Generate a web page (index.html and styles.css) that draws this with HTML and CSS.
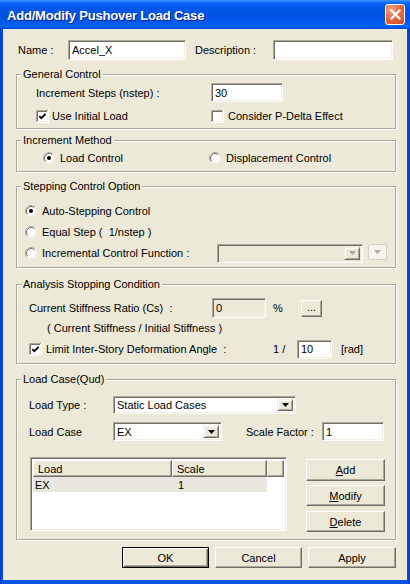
FILE: index.html
```html
<!DOCTYPE html>
<html>
<head>
<meta charset="utf-8">
<title>Add/Modify Pushover Load Case</title>
<link rel="stylesheet" href="styles.css">
</head>
<body>
<div class="window">
  <div class="titlebar">
    <span class="title">Add/Modify Pushover Load Case</span>
    <span class="close"><svg width="11" height="11" viewBox="0 0 11 11"><path d="M1.5 1.5L9.5 9.5M9.5 1.5L1.5 9.5" stroke="#fff" stroke-width="2.2" stroke-linecap="square"/></svg></span>
  </div>
  <div class="client">
    <div class="name-row">
      <span class="name-lbl">Name :</span>
      <span class="edit e-name">Accel_X</span>
      <span class="desc-lbl">Description :</span>
      <span class="edit e-desc"></span>
    </div>

    <fieldset class="group g-general">
      <legend>General Control</legend>
      <div class="gbody">
        <div class="row r-steps">
          <span class="c175">Increment Steps (nstep) :</span>
          <span class="edit e-steps">30</span>
        </div>
        <div class="row r-checks">
          <span class="c175 opt gap3">
            <svg class="chk" width="13" height="13" viewBox="0 0 13 13"><rect width="13" height="13" fill="#fff"/><path d="M0.5 12V0.5H12" stroke="#ACA899" fill="none"/><path d="M1.5 11V1.5H11" stroke="#716F64" fill="none"/><path d="M1.5 11.5H11.5V1.5" stroke="#F1EFE2" fill="none"/><path d="M3.3 6.1L5.3 8.2L9.6 3.9" stroke="#000" stroke-width="1.8" fill="none"/></svg>
            <span>Use Initial Load</span>
          </span>
          <span class="opt gap4">
            <svg class="chk" width="13" height="13" viewBox="0 0 13 13"><rect width="13" height="13" fill="#fff"/><path d="M0.5 12V0.5H12" stroke="#ACA899" fill="none"/><path d="M1.5 11V1.5H11" stroke="#716F64" fill="none"/><path d="M1.5 11.5H11.5V1.5" stroke="#F1EFE2" fill="none"/></svg>
            <span>Consider P-Delta Effect</span>
          </span>
        </div>
      </div>
    </fieldset>

    <fieldset class="group g-method">
      <legend>Increment Method</legend>
      <div class="gbody">
        <div class="row r-radio">
          <span class="c166 opt gap5">
            <svg class="rad" width="12" height="12" viewBox="0 0 12 12"><circle cx="6" cy="6" r="5.5" fill="#fff"/><path d="M2.11 9.89A5.5 5.5 0 0 1 9.89 2.11" stroke="#ACA899" fill="none"/><path d="M2.82 9.18A4.5 4.5 0 0 1 9.18 2.82" stroke="#716F64" fill="none"/><path d="M9.18 2.82A4.5 4.5 0 0 1 2.82 9.18" stroke="#F1EFE2" fill="none"/><circle cx="6" cy="6" r="2" fill="#000"/></svg>
            <span>Load Control</span>
          </span>
          <span class="opt gap5">
            <svg class="rad" width="12" height="12" viewBox="0 0 12 12"><circle cx="6" cy="6" r="5.5" fill="#fff"/><path d="M2.11 9.89A5.5 5.5 0 0 1 9.89 2.11" stroke="#ACA899" fill="none"/><path d="M2.82 9.18A4.5 4.5 0 0 1 9.18 2.82" stroke="#716F64" fill="none"/><path d="M9.18 2.82A4.5 4.5 0 0 1 2.82 9.18" stroke="#F1EFE2" fill="none"/></svg>
            <span>Displacement Control</span>
          </span>
        </div>
      </div>
    </fieldset>

    <fieldset class="group g-step">
      <legend>Stepping Control Option</legend>
      <div class="gbody">
        <div class="row r-radio">
          <span class="opt gap5">
            <svg class="rad" width="12" height="12" viewBox="0 0 12 12"><circle cx="6" cy="6" r="5.5" fill="#fff"/><path d="M2.11 9.89A5.5 5.5 0 0 1 9.89 2.11" stroke="#ACA899" fill="none"/><path d="M2.82 9.18A4.5 4.5 0 0 1 9.18 2.82" stroke="#716F64" fill="none"/><path d="M9.18 2.82A4.5 4.5 0 0 1 2.82 9.18" stroke="#F1EFE2" fill="none"/><circle cx="6" cy="6" r="2" fill="#000"/></svg>
            <span>Auto-Stepping Control</span>
          </span>
        </div>
        <div class="row r-radio r-next">
          <span class="opt gap5">
            <svg class="rad" width="12" height="12" viewBox="0 0 12 12"><circle cx="6" cy="6" r="5.5" fill="#fff"/><path d="M2.11 9.89A5.5 5.5 0 0 1 9.89 2.11" stroke="#ACA899" fill="none"/><path d="M2.82 9.18A4.5 4.5 0 0 1 9.18 2.82" stroke="#716F64" fill="none"/><path d="M9.18 2.82A4.5 4.5 0 0 1 2.82 9.18" stroke="#F1EFE2" fill="none"/></svg>
            <span>Equal Step (&nbsp; 1/nstep )</span>
          </span>
        </div>
        <div class="row r-radio r-next">
          <span class="c192 opt gap5">
            <svg class="rad" width="12" height="12" viewBox="0 0 12 12"><circle cx="6" cy="6" r="5.5" fill="#fff"/><path d="M2.11 9.89A5.5 5.5 0 0 1 9.89 2.11" stroke="#ACA899" fill="none"/><path d="M2.82 9.18A4.5 4.5 0 0 1 9.18 2.82" stroke="#716F64" fill="none"/><path d="M9.18 2.82A4.5 4.5 0 0 1 2.82 9.18" stroke="#F1EFE2" fill="none"/></svg>
            <span>Incremental Control Function :</span>
          </span>
          <span class="edit combo disabled c-func">
            <span class="combo-text"></span>
            <span class="arrow"><svg width="7" height="4" viewBox="0 0 7 4"><path d="M0 0H7L3.5 4Z" fill="#ACA899"/></svg></span>
          </span>
          <span class="mini-btn"><svg width="7" height="4" viewBox="0 0 7 4"><path d="M0 0H7L3.5 4Z" fill="#ACA899"/></svg></span>
        </div>
      </div>
    </fieldset>

    <fieldset class="group g-stop">
      <legend>Analysis Stopping Condition</legend>
      <div class="gbody">
        <div class="row r-cs">
          <span class="c183">Current Stiffness Ratio (Cs)&nbsp; :</span>
          <span class="edit disabled e-cs">0</span>
          <span class="pct">%</span>
          <span class="btn b-dots">...</span>
        </div>
        <div class="row r-note">( Current Stiffness / Initial Stiffness )</div>
        <div class="row r-limit">
          <span class="c244 opt gap4">
            <svg class="chk" width="13" height="13" viewBox="0 0 13 13"><rect width="13" height="13" fill="#fff"/><path d="M0.5 12V0.5H12" stroke="#ACA899" fill="none"/><path d="M1.5 11V1.5H11" stroke="#716F64" fill="none"/><path d="M1.5 11.5H11.5V1.5" stroke="#F1EFE2" fill="none"/><path d="M3.3 6.1L5.3 8.2L9.6 3.9" stroke="#000" stroke-width="1.8" fill="none"/></svg>
            <span>Limit Inter-Story Deformation Angle&nbsp; :</span>
          </span>
          <span class="one">1 /</span>
          <span class="edit e-angle">10</span>
          <span class="rad-unit">[rad]</span>
        </div>
      </div>
    </fieldset>

    <fieldset class="group g-load">
      <legend>Load Case(Qud)</legend>
      <div class="gbody">
        <div class="row r-type">
          <span class="c84">Load Type :</span>
          <span class="edit combo c-type">
            <span class="combo-text">Static Load Cases</span>
            <span class="arrow"><svg width="7" height="4" viewBox="0 0 7 4"><path d="M0 0H7L3.5 4Z" fill="#000"/></svg></span>
          </span>
        </div>
        <div class="row r-case">
          <span class="c84">Load Case</span>
          <span class="edit combo c-case">
            <span class="combo-text">EX</span>
            <span class="arrow"><svg width="7" height="4" viewBox="0 0 7 4"><path d="M0 0H7L3.5 4Z" fill="#000"/></svg></span>
          </span>
          <span class="sf-lbl">Scale Factor :</span>
          <span class="edit e-sf">1</span>
        </div>
        <div class="list-area">
          <div class="list">
            <div class="list-head">
              <span class="hcell col-load">Load</span>
              <span class="hcell col-scale">Scale</span>
              <span class="hcell col-rest"></span>
            </div>
            <div class="list-row">
              <span class="col-load rcell">EX</span>
              <span class="col-scale rcell rscale">1</span>
            </div>
          </div>
          <div class="side-btns">
            <span class="btn b-add"><span><u>A</u>dd</span></span>
            <span class="btn b-mod"><span><u>M</u>odify</span></span>
            <span class="btn b-del"><span><u>D</u>elete</span></span>
          </div>
        </div>
      </div>
    </fieldset>

    <div class="footer">
      <span class="btn default b-foot">OK</span>
      <span class="btn b-foot">Cancel</span>
      <span class="btn b-foot b-apply">Apply</span>
    </div>
  </div>
</div>
</body>
</html>
```

FILE: styles.css
```css
* { box-sizing: border-box; }
html, body { margin: 0; padding: 0; }
body {
  width: 410px;
  height: 584px;
  overflow: hidden;
  font-family: "Liberation Sans", Arial, sans-serif;
  font-size: 11px;
  color: #000;
  background: #0842D8;
}
.window {
  width: 410px;
  height: 584px;
  display: flex;
  flex-direction: column;
  background: linear-gradient(to right, #0038D0 0, #0A55E6 3px, #0A55E6 407px, #0032C4 410px);
}
.titlebar {
  height: 29px;
  flex: none;
  display: flex;
  align-items: center;
  padding: 0 5px 0 7px;
  background: linear-gradient(to bottom, #3D95FF 0px, #0A63F4 3px, #0057E8 8px, #0054E3 16px, #0058EA 22px, #0062F6 26px, #004DDD 29px);
}
.title {
  color: #fff;
  font-weight: bold;
  font-size: 13px;
  letter-spacing: -0.2px;
  text-shadow: 1px 1px 0 #0A1C8C;
  margin-top: 1px;
}
.close {
  margin-left: auto;
  width: 20px;
  height: 21px;
  border: 1px solid #fff;
  border-radius: 3px;
  background: radial-gradient(circle at 30% 25%, #F2A58E 0, #E56A45 45%, #D0461F 100%);
  display: flex;
  align-items: center;
  justify-content: center;
}
.client {
  flex: 1;
  margin: 0 3px 4px 3px;
  background: #ECE9D8;
  padding-top: 11px;
  display: flex;
  flex-direction: column;
}

/* generic controls */
.row { display: flex; align-items: center; }
.opt { display: flex; align-items: center; }
.gap3 .chk { margin-right: 3px; }
.gap4 .chk { margin-right: 4px; }
.gap5 .rad { margin-right: 5px; }
.chk, .rad { flex: none; }

.edit {
  display: flex;
  align-items: center;
  background: #fff;
  border: 1px solid;
  border-color: #ACA899 #fff #fff #ACA899;
  box-shadow: inset 1px 1px 0 #716F64, inset -1px -1px 0 #F1EFE2;
  padding-left: 3px;
  white-space: nowrap;
  flex: none;
}
.edit.disabled { background: #ECE9D8; }

.btn {
  display: flex;
  align-items: center;
  justify-content: center;
  background: #ECE9D8;
  border: 1px solid;
  border-color: #fff #716F64 #716F64 #fff;
  box-shadow: inset -1px -1px 0 #ACA899;
  flex: none;
}
.btn.default {
  border: 1px solid #000;
  box-shadow: inset 1px 1px 0 #fff, inset -1px -1px 0 #716F64, inset -2px -2px 0 #ACA899;
}

.combo { padding: 2px; justify-content: space-between; }
.combo-text { padding-left: 1px; }
.arrow {
  width: 16px;
  height: 100%;
  display: flex;
  align-items: center;
  justify-content: center;
  background: #ECE9D8;
  border: 1px solid;
  border-color: #F1EFE2 #716F64 #716F64 #F1EFE2;
  box-shadow: inset 1px 1px 0 #fff, inset -1px -1px 0 #ACA899;
}

/* name row */
.name-row { display: flex; align-items: center; height: 20px; padding-left: 15px; }
.name-lbl { width: 50px; }
.e-name { width: 118px; height: 20px; }
.desc-lbl { margin-left: 9px; width: 78px; }
.e-desc { width: 120px; height: 20px; }

/* group boxes */
.group {
  margin: 0 11px 0 13px;
  padding: 0;
  min-width: 0;
  border: 1px solid #ACA899;
  box-shadow: inset 1px 1px 0 #fff, 1px 1px 0 #fff;
}
.group legend {
  margin-left: 4px;
  padding: 0 2px;
  line-height: 13px;
  background: #ECE9D8;
}

/* general */
.g-general { margin-top: 8px; }
.g-general .gbody { padding: 2px 0 2px 19px; }
.c175 { width: 175px; flex: none; }
.r-steps { height: 19px; }
.e-steps { width: 72px; height: 19px; }
.r-checks { height: 20px; margin-top: 4px; }

/* method */
.g-method { margin-top: 5px; }
.g-method .gbody { padding: 1px 0 3px 26px; }
.r-radio { height: 20px; }
.c166 { width: 166px; flex: none; }

/* stepping */
.g-step { margin-top: 8px; }
.g-step .gbody { padding: 8px 0 4px 8px; }
.r-next { margin-top: 1px; }
.c192 { width: 192px; flex: none; }
.c-func { width: 146px; height: 19px; }
.mini-btn {
  margin-left: 5px;
  width: 19px;
  height: 16px;
  display: flex;
  align-items: center;
  justify-content: center;
  background: #F4F3EC;
  border: 1px solid #D2CFC0;
  border-radius: 2px;
  margin-top: -3px;
}

/* stopping */
.g-stop { margin-top: 10px; }
.g-stop .gbody { padding: 7px 0 4px 12px; }
.r-cs { height: 20px; }
.c183 { width: 183px; flex: none; }
.e-cs { width: 54px; height: 20px; }
.pct { width: 35px; padding-left: 7px; flex: none; }
.b-dots { width: 21px; height: 17px; padding-bottom: 3px; }
.r-note { height: 18px; margin-top: 1px; padding-left: 18px; }
.r-limit { height: 20px; margin-top: 2px; }
.c244 { width: 244px; flex: none; }
.one { width: 24px; flex: none; }
.e-angle { width: 35px; height: 19px; }
.rad-unit { margin-left: 9px; }

/* load case */
.g-load { margin-top: 9px; }
.g-load .gbody { padding: 10px 0 7px 12px; }
.r-type { height: 18px; }
.c84 { width: 84px; flex: none; }
.c-type { width: 183px; height: 18px; }
.r-case { height: 19px; margin-top: 8px; }
.c-case { width: 109px; height: 19px; }
.sf-lbl { margin-left: 24px; width: 76px; flex: none; }
.e-sf { width: 62px; height: 19px; }

.list-area { display: flex; margin-top: 16px; padding-left: 1px; }
.list {
  width: 257px;
  height: 74px;
  background: #fff;
  border: 1px solid;
  border-color: #ACA899 #fff #fff #ACA899;
  box-shadow: inset 1px 1px 0 #716F64, inset -1px -1px 0 #F1EFE2;
  padding: 2px 2px 2px 2px;
  flex: none;
}
.list-head { display: flex; height: 17px; }
.hcell {
  display: flex;
  align-items: center;
  background: #ECE9D8;
  border: 1px solid;
  border-color: #fff #716F64 #716F64 #fff;
  box-shadow: inset -1px -1px 0 #ACA899;
  padding-left: 4px;
}
.col-load { width: 139px; flex: none; }
.col-scale { width: 95px; flex: none; }
.col-rest { flex: 1; }
.list-row { display: flex; height: 15px; }
.rcell { display: flex; align-items: center; background: #E9E7DF; padding-left: 2px; }
.rscale { padding-left: 6px; }

.side-btns { display: flex; flex-direction: column; margin-left: 19px; }
.side-btns .btn { width: 79px; }
.b-add { height: 22px; margin-top: 2px; }
.b-mod { height: 21px; margin-top: 4px; }
.b-del { height: 21px; margin-top: 5px; }

/* footer */
.footer {
  display: flex;
  justify-content: flex-end;
  gap: 6px;
  margin-top: 7px;
  padding-right: 11px;
}
.b-foot { width: 87px; height: 21px; }
.b-apply { width: 88px; }
```
